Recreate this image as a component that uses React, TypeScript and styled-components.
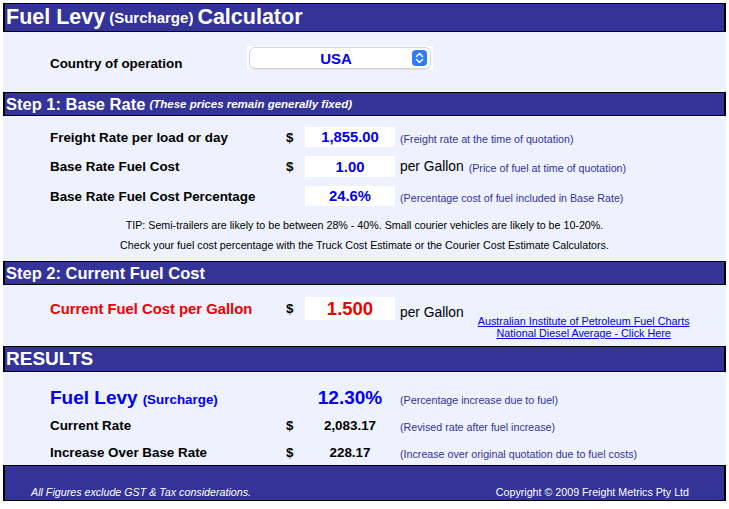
import styled, { createGlobalStyle } from "styled-components";

const GlobalStyle = createGlobalStyle`
  body {
    margin: 0;
    background: #ffffff;
    font-family: "Liberation Sans", Arial, sans-serif;
  }
`;

const Page = styled.div`
  width: 723px;
  margin: 3px 0 0 3px;
  background: #eef2fe;
  color: #000;
`;

const Bar = styled.div<{ $h: number; $size: number }>`
  display: flex;
  align-items: center;
  height: ${(p) => p.$h}px;
  box-sizing: border-box;
  padding-left: 1px;
  background: #333399;
  border: 1px solid #000;
  border-left-width: 2px;
  border-right-width: 2px;
  color: #fff;
  font-weight: bold;
  font-size: ${(p) => p.$size}px;
  white-space: nowrap;
`;

const Small = styled.span<{ $size: number; $italic?: boolean; $gap?: number }>`
  font-size: ${(p) => p.$size}px;
  font-style: ${(p) => (p.$italic ? "italic" : "normal")};
  margin-left: ${(p) => p.$gap ?? 4}px;
  margin-right: 4px;
`;

const Section = styled.div<{ $pt: number; $pb: number; $gap?: number }>`
  display: flex;
  flex-direction: column;
  gap: ${(p) => p.$gap ?? 0}px;
  padding: ${(p) => p.$pt}px 0 ${(p) => p.$pb}px 0;
`;

const CountryRow = styled.div`
  display: flex;
  align-items: flex-start;
  padding-left: 47px;
`;

const CountryLabel = styled.div`
  width: 197px;
  margin-top: 10px;
  font-size: 13.4px;
  font-weight: bold;
`;

const SelectCell = styled.div`
  background: #fff;
  width: 186px;
  height: 24px;
  box-sizing: border-box;
  padding: 1px 2px;
`;

const Select = styled.div`
  display: flex;
  align-items: center;
  height: 22px;
  box-sizing: border-box;
  border: 1px solid #d4d4d8;
  border-radius: 6px;
  box-shadow: 0 1px 1px rgba(0, 0, 0, 0.12);
  padding: 0 3px 0 10px;
`;

const SelectValue = styled.div`
  flex: 1;
  text-align: center;
  color: #0000ee;
  font-size: 15px;
  font-weight: bold;
`;

const Stepper = styled.div`
  width: 15px;
  height: 16px;
  border-radius: 4px;
  background: #2f7cf6;
  display: flex;
  align-items: center;
  justify-content: center;
`;

const Row = styled.div<{ $h: number }>`
  display: grid;
  grid-template-columns: 236px 19px 90px auto;
  grid-template-rows: ${(p) => p.$h}px;
  align-items: center;
  padding-left: 47px;
`;

const Label = styled.div<{ $color?: string; $size?: number }>`
  font-size: ${(p) => p.$size ?? 13.4}px;
  font-weight: bold;
  color: ${(p) => p.$color ?? "#000"};
  white-space: nowrap;
`;

const Dollar = styled.div`
  font-size: 13.4px;
  font-weight: bold;
`;

const InputBox = styled.div<{ $color?: string; $size?: number }>`
  background: #fff;
  height: 100%;
  display: flex;
  align-items: center;
  justify-content: center;
  color: ${(p) => p.$color ?? "#0000ee"};
  font-size: ${(p) => p.$size ?? 14.8}px;
  font-weight: bold;
`;

const Value = styled.div<{ $color?: string; $size?: number }>`
  text-align: center;
  color: ${(p) => p.$color ?? "#000"};
  font-size: ${(p) => p.$size ?? 13.4}px;
  font-weight: bold;
`;

const After = styled.div<{ $top?: boolean }>`
  display: flex;
  align-items: ${(p) => (p.$top ? "flex-start" : "center")};
  align-self: ${(p) => (p.$top ? "start" : "center")};
  padding-left: 5px;
  gap: 5px;
  white-space: nowrap;
`;

const Unit = styled.span<{ $pt?: number }>`
  font-size: 13.8px;
  padding-top: ${(p) => p.$pt ?? 0}px;
`;

const Note = styled.span`
  font-size: 10.7px;
  color: #333399;
  padding-top: 3px;
`;

const Tip = styled.div`
  text-align: center;
  font-size: 10.7px;
  line-height: 20px;
`;

const Links = styled.div`
  padding-top: 18px;
  width: 226px;
  margin-left: 2px;
  text-align: center;
  font-size: 10.8px;
  line-height: 12px;
  a {
    color: #0000ee;
    text-decoration: underline;
  }
`;

const Footer = styled.div`
  display: flex;
  justify-content: space-between;
  align-items: flex-end;
  height: 36px;
  box-sizing: border-box;
  padding: 0 35px 2px 26px;
  background: #333399;
  border: 1px solid #000;
  border-left-width: 2px;
  border-right-width: 2px;
  color: #fff;
  font-size: 10.7px;
`;

const FootNote = styled.span`
  font-style: italic;
`;

export default function App() {
  return (
    <>
      <GlobalStyle />
      <Page>
        <Bar $h={29} $size={21.5}>
          Fuel Levy<Small $size={15}>(Surcharge)</Small>Calculator
        </Bar>

        <Section $pt={14} $pb={21}>
          <CountryRow>
            <CountryLabel>Country of operation</CountryLabel>
            <SelectCell>
              <Select>
                <SelectValue>USA</SelectValue>
                <Stepper>
                  <svg width="9" height="12" viewBox="0 0 9 12" fill="none" stroke="#fff" strokeWidth="1.5" strokeLinecap="round" strokeLinejoin="round">
                    <path d="M1.5 4.5 L4.5 1.5 L7.5 4.5" />
                    <path d="M1.5 7.5 L4.5 10.5 L7.5 7.5" />
                  </svg>
                </Stepper>
              </Select>
            </SelectCell>
          </CountryRow>
        </Section>

        <Bar $h={24} $size={16.5}>
          Step 1: Base Rate<Small $size={11.5} $italic>(These prices remain generally fixed)</Small>
        </Bar>

        <Section $pt={11} $pb={6} $gap={9}>
          <Row $h={20}>
            <Label>Freight Rate per load or day</Label>
            <Dollar>$</Dollar>
            <InputBox>1,855.00</InputBox>
            <After>
              <Note>(Freight rate at the time of quotation)</Note>
            </After>
          </Row>
          <Row $h={21}>
            <Label>Base Rate Fuel Cost</Label>
            <Dollar>$</Dollar>
            <InputBox>1.00</InputBox>
            <After>
              <Unit>per Gallon</Unit>
              <Note>(Price of fuel at time of quotation)</Note>
            </After>
          </Row>
          <Row $h={20}>
            <Label>Base Rate Fuel Cost Percentage</Label>
            <div />
            <InputBox>24.6%</InputBox>
            <After>
              <Note>(Percentage cost of fuel included in Base Rate)</Note>
            </After>
          </Row>
          <div>
            <Tip>
              TIP: Semi-trailers are likely to be between 28% - 40%. Small courier vehicles are likely to be 10-20%.
            </Tip>
            <Tip>
              Check your fuel cost percentage with the Truck Cost Estimate or the Courier Cost Estimate Calculators.
            </Tip>
          </div>
        </Section>

        <Bar $h={24} $size={16.5}>
          Step 2: Current Fuel Cost
        </Bar>

        <Section $pt={12} $pb={26}>
          <Row $h={23}>
            <Label $color="#ee0000" $size={14.8}>Current Fuel Cost per Gallon</Label>
            <Dollar>$</Dollar>
            <InputBox $color="#ee0000" $size={18.5}>1.500</InputBox>
            <After $top>
              <Unit $pt={8}>per Gallon</Unit>
              <Links>
                <a href="#">Australian Institute of Petroleum Fuel Charts</a>
                <br />
                <a href="#">National Diesel Average - Click Here</a>
              </Links>
            </After>
          </Row>
        </Section>

        <Bar $h={26} $size={19}>
          RESULTS
        </Bar>

        <Section $pt={13} $pb={1} $gap={2}>
          <Row $h={26}>
            <Label $color="#0000ee" $size={19}>
              Fuel Levy<Small $size={13.4} $gap={5}>(Surcharge)</Small>
            </Label>
            <div />
            <Value $color="#0000ee" $size={19}>12.30%</Value>
            <After>
              <Note>(Percentage increase due to fuel)</Note>
            </After>
          </Row>
          <Row $h={25}>
            <Label>Current Rate</Label>
            <Dollar>$</Dollar>
            <Value>2,083.17</Value>
            <After>
              <Note>(Revised rate after fuel increase)</Note>
            </After>
          </Row>
          <Row $h={24}>
            <Label>Increase Over Base Rate</Label>
            <Dollar>$</Dollar>
            <Value>228.17</Value>
            <After>
              <Note>(Increase over original quotation due to fuel costs)</Note>
            </After>
          </Row>
        </Section>

        <Footer>
          <FootNote>All Figures exclude GST &amp; Tax considerations.</FootNote>
          <span>Copyright © 2009 Freight Metrics Pty Ltd</span>
        </Footer>
      </Page>
    </>
  );
}
